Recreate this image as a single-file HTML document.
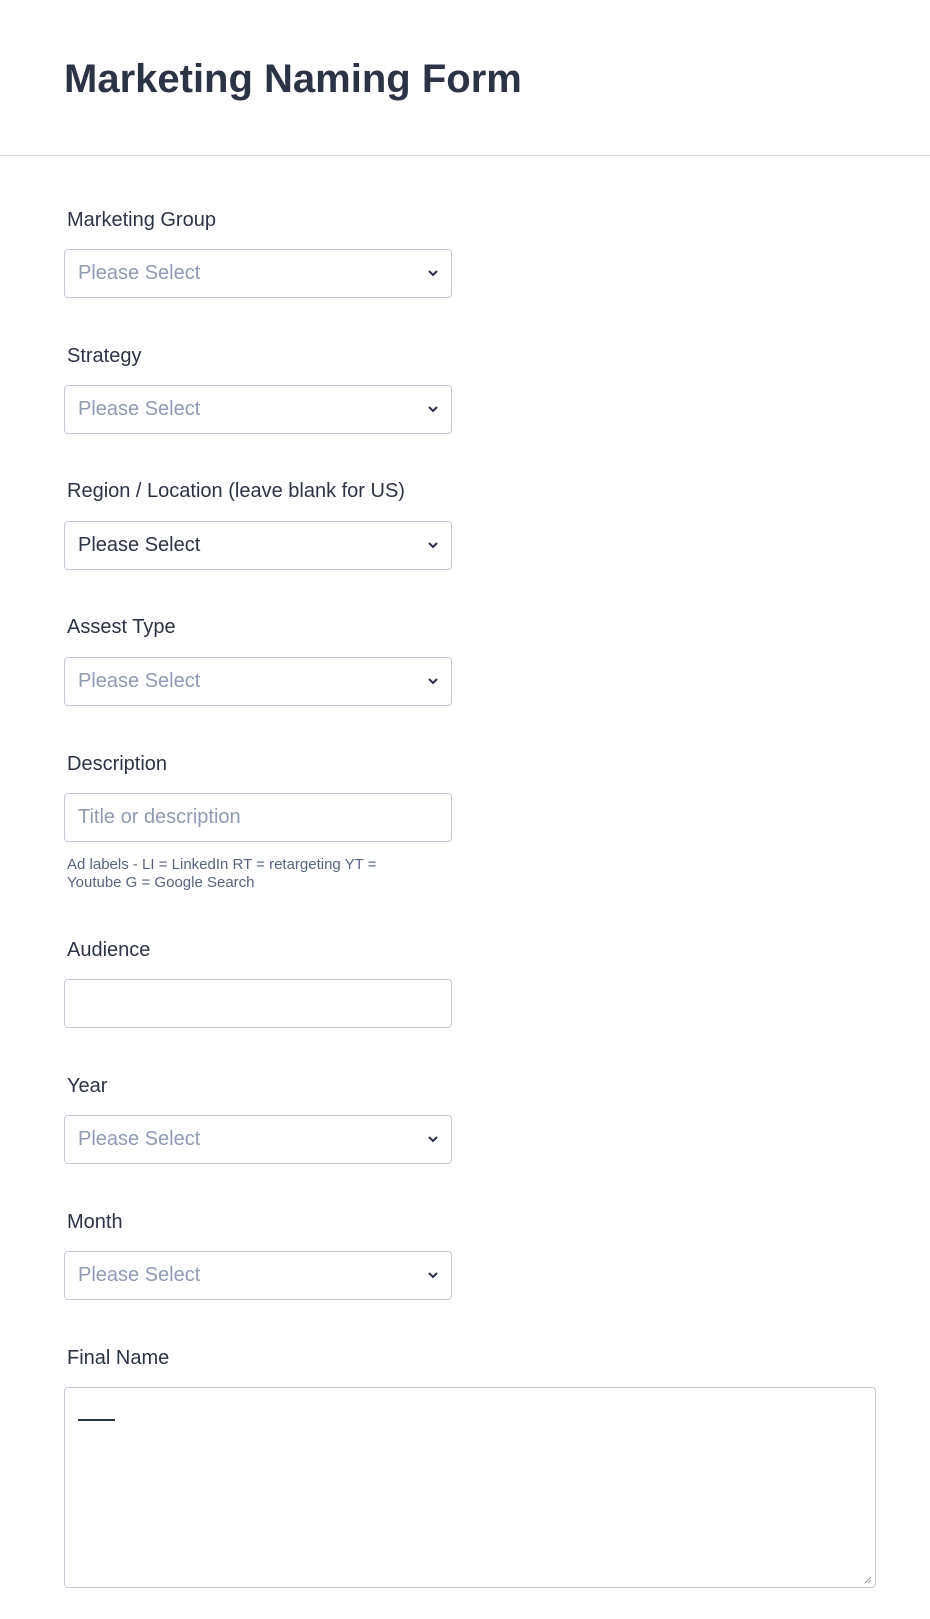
<!DOCTYPE html>
<html><head><meta charset="utf-8"><style>
body{margin:0;width:930px;height:1619px;background:#fff;font-family:"Liberation Sans",sans-serif;position:relative;overflow:hidden;color:#2c3345}
h1{position:absolute;left:64px;top:57px;margin:0;font-size:40px;font-weight:bold;color:#2c3345;letter-spacing:0px}
.sep{position:absolute;left:0;right:0;top:155px;border-top:1px solid #d8dae2}
.lbl{position:absolute;left:67px;font-size:20px;line-height:22px;color:#2c3345}
.box{position:absolute;left:64px;width:388px;height:49px;border:1px solid #c3cad8;border-radius:4px;box-sizing:border-box;font-size:20px;color:#8f9bb3;padding-left:13px;line-height:47px}
.dark{color:#2c3345}
.chev{position:absolute;right:12px;top:19px}
.help{position:absolute;left:67px;top:856px;font-size:15px;line-height:18px;color:#57647e}
</style></head><body>
<h1>Marketing Naming Form</h1>
<div class="sep"></div>

<div class="lbl" style="top:209px">Marketing Group</div>
<div class="box" style="top:249px">Please Select<svg class="chev" width="12" height="8" viewBox="0 0 12 8"><path d="M2 2l4 4 4-4" fill="none" stroke="#2c3345" stroke-width="2"/></svg></div>

<div class="lbl" style="top:345px">Strategy</div>
<div class="box" style="top:385px">Please Select<svg class="chev" width="12" height="8" viewBox="0 0 12 8"><path d="M2 2l4 4 4-4" fill="none" stroke="#2c3345" stroke-width="2"/></svg></div>

<div class="lbl" style="top:480px">Region / Location (leave blank for US)</div>
<div class="box dark" style="top:521px">Please Select<svg class="chev" width="12" height="8" viewBox="0 0 12 8"><path d="M2 2l4 4 4-4" fill="none" stroke="#2c3345" stroke-width="2"/></svg></div>

<div class="lbl" style="top:616px">Assest Type</div>
<div class="box" style="top:657px">Please Select<svg class="chev" width="12" height="8" viewBox="0 0 12 8"><path d="M2 2l4 4 4-4" fill="none" stroke="#2c3345" stroke-width="2"/></svg></div>

<div class="lbl" style="top:753px">Description</div>
<div class="box" style="top:793px">Title or description</div>
<div class="help">Ad labels - LI = LinkedIn RT = retargeting YT =<br>Youtube G = Google Search</div>

<div class="lbl" style="top:939px">Audience</div>
<div class="box" style="top:979px"></div>

<div class="lbl" style="top:1075px">Year</div>
<div class="box" style="top:1115px">Please Select<svg class="chev" width="12" height="8" viewBox="0 0 12 8"><path d="M2 2l4 4 4-4" fill="none" stroke="#2c3345" stroke-width="2"/></svg></div>

<div class="lbl" style="top:1211px">Month</div>
<div class="box" style="top:1251px">Please Select<svg class="chev" width="12" height="8" viewBox="0 0 12 8"><path d="M2 2l4 4 4-4" fill="none" stroke="#2c3345" stroke-width="2"/></svg></div>

<div class="lbl" style="top:1347px">Final Name</div>
<div style="position:absolute;left:64px;top:1387px;width:812px;height:201px;border:1px solid #c3cad8;border-radius:4px;box-sizing:border-box">
<div style="position:absolute;left:13px;top:31px;width:37px;border-top:2px solid #2c3345"></div>
<svg style="position:absolute;right:3px;bottom:3px" width="8" height="8" viewBox="0 0 8 8"><path d="M7 1L1 7M7 4L4 7" stroke="#999" stroke-width="1"/></svg>
</div>
</body></html>
